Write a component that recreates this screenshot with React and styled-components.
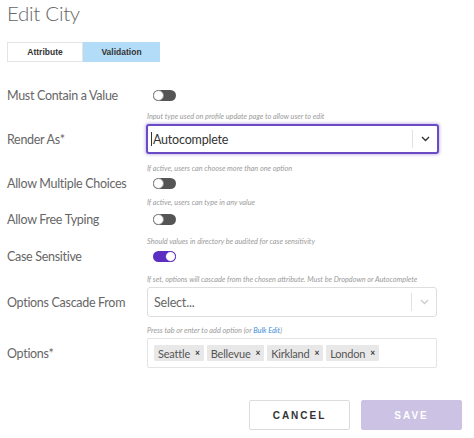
import React from "react";
import styled, { createGlobalStyle } from "styled-components";

const Global = createGlobalStyle`
  html, body { margin: 0; padding: 0; background: #fff; }
  body { font-family: Lato, "Open Sans", sans-serif; color: #555; }
  * { box-sizing: border-box; }
`;

const Page = styled.div`
  width: 474px;
  height: 438px;
  padding: 0 7px;
  overflow: hidden;
`;

const Title = styled.h1`
  margin: 0;
  padding-top: 0;
  font-family: Lato, sans-serif;
  font-weight: 300;
  font-size: 20.5px;
  line-height: 26px;
  letter-spacing: -0.3px;
  color: #666;
`;

const Tabs = styled.div`
  display: flex;
  margin-top: 16px;
  height: 20px;
`;

const Tab = styled.div`
  width: ${(p) => p.$w}px;
  display: flex;
  align-items: center;
  justify-content: center;
  font-family: "Liberation Sans", Arial, sans-serif;
  font-weight: bold;
  font-size: 8.5px;
  color: #333;
  background: ${(p) => (p.$active ? "#b3dcf8" : "#fff")};
  border: 1px solid ${(p) => (p.$active ? "#b3dcf8" : "#e4e4e4")};
`;

const Form = styled.div`
  display: flex;
  flex-direction: column;
`;

const Field = styled.div`
  display: grid;
  grid-template-columns: 140px 292px;
  margin-top: ${(p) => p.$mt}px;
`;

const Hint = styled.div`
  grid-column: 2;
  grid-row: 1;
  font-style: italic;
  font-size: 7.3px;
  line-height: 10px;
  height: 10px;
  color: #9a9a9a;
  margin-bottom: ${(p) => p.$mb ?? 2}px;
  white-space: nowrap;
  a { color: #3d8fd9; text-decoration: none; }
`;

const Label = styled.div`
  grid-column: 1;
  grid-row: 2;
  align-self: center;
  font-size: 12.5px;
  line-height: 11px;
  letter-spacing: -0.3px;
  color: #666;
  white-space: nowrap;
`;

const Control = styled.div`
  grid-column: 2;
  grid-row: 2;
  display: flex;
  align-items: center;
  height: ${(p) => p.$h}px;
`;

const Track = styled.div`
  position: relative;
  width: 23px;
  height: 11px;
  border-radius: 6px;
  margin-left: 6px;
  background: ${(p) => (p.$on ? "#5a2fc2" : "#555")};
`;

const Knob = styled.div`
  position: absolute;
  top: 0;
  ${(p) => (p.$on ? "right: 0;" : "left: 0;")}
  width: 11px;
  height: 11px;
  border-radius: 50%;
  background: #fff;
  border: 1px solid ${(p) => (p.$on ? "#5a2fc2" : "#888")};
`;

const Toggle = ({ on }) => (
  <Track $on={on}>
    <Knob $on={on} />
  </Track>
);

const SelectBox = styled.div`
  width: ${(p) => p.$w}px;
  height: 30px;
  display: flex;
  align-items: center;
  border-radius: 3px;
  background: #fff;
  border: ${(p) => (p.$focus ? "2px solid #6a4bc4" : "1px solid #dedede")};
  box-shadow: ${(p) => (p.$focus ? "0 0 3px 1px rgba(106,75,196,0.35)" : "none")};
  margin-left: ${(p) => p.$ml || 0}px;
`;

const SelectValue = styled.div`
  flex: 1;
  padding-left: ${(p) => p.$pl}px;
  font-size: 12.5px;
  letter-spacing: -0.2px;
  color: ${(p) => (p.$placeholder ? "#666" : "#333")};
  display: flex;
  align-items: center;
`;

const Caret = styled.span`
  display: inline-block;
  width: 1px;
  height: 14px;
  background: #333;
  margin-right: 1px;
`;

const Sep = styled.div`
  width: 1px;
  height: 18px;
  background: #e2e2e2;
`;

const Chevron = styled.div`
  width: 24px;
  display: flex;
  justify-content: center;
  align-items: center;
`;

const Chev = ({ color }) => (
  <svg width="9" height="6" viewBox="0 0 9 6">
    <path d="M1 1 L4.5 4.5 L8 1" fill="none" stroke={color} strokeWidth="1.4" />
  </svg>
);

const TagBox = styled.div`
  width: 290px;
  height: 30px;
  display: flex;
  align-items: center;
  gap: 3px;
  padding-left: 6px;
  border: 1px solid #e4e4e4;
  border-radius: 2px;
`;

const Tag = styled.div`
  display: flex;
  align-items: center;
  height: 16px;
  padding: 0 4px 0 4px;
  background: #e8e8e8;
  font-size: 11px;
  letter-spacing: -0.2px;
  color: #555;
  border-radius: 1px;
`;

const TagX = styled.span`
  margin-left: 5px;
  font-size: 8.5px;
  font-weight: bold;
  color: #333;
`;

const Footer = styled.div`
  display: flex;
  justify-content: flex-end;
  gap: 11px;
  margin-top: 32px;
  padding-right: 5px;
`;

const Button = styled.button`
  width: 101px;
  height: 30px;
  border-radius: 2px;
  font-family: "Liberation Sans", Arial, sans-serif;
  font-weight: bold;
  font-size: 10px;
  letter-spacing: 2px;
  cursor: pointer;
  color: ${(p) => (p.$primary ? "#fff" : "#333")};
  background: ${(p) => (p.$primary ? "#cbc2e4" : "#fff")};
  border: 1px solid ${(p) => (p.$primary ? "#cbc2e4" : "#dcdcdc")};
`;

export default function App() {
  const tags = ["Seattle", "Bellevue", "Kirkland", "London"];
  return (
    <Page>
      <Global />
      <Title>Edit City</Title>
      <Tabs>
        <Tab $w={76}>Attribute</Tab>
        <Tab $w={77} $active>
          Validation
        </Tab>
      </Tabs>
      <Form>
        <Field $mt={28}>
          <Label>Must Contain a Value</Label>
          <Control $h={11}>
            <Toggle />
          </Control>
        </Field>
        <Field $mt={11}>
          <Hint>Input type used on profile update page to allow user to edit</Hint>
          <Label>Render As*</Label>
          <Control $h={30}>
            <SelectBox $w={293} $focus $ml={-1}>
              <SelectValue $pl={3}>
                <Caret />
                Autocomplete
              </SelectValue>
              <Sep />
              <Chevron>
                <Chev color="#333" />
              </Chevron>
            </SelectBox>
          </Control>
        </Field>
        <Field $mt={10}>
          <Hint $mb={4}>If active, users can choose more than one option</Hint>
          <Label>Allow Multiple Choices</Label>
          <Control $h={11}>
            <Toggle />
          </Control>
        </Field>
        <Field $mt={9}>
          <Hint $mb={6}>If active, users can type in any value</Hint>
          <Label>Allow Free Typing</Label>
          <Control $h={11}>
            <Toggle />
          </Control>
        </Field>
        <Field $mt={12}>
          <Hint $mb={4}>Should values in directory be audited for case sensitivity</Hint>
          <Label>Case Sensitive</Label>
          <Control $h={11}>
            <Toggle on />
          </Control>
        </Field>
        <Field $mt={13}>
          <Hint $mb={2}>
            If set, options will cascade from the chosen attribute. Must be Dropdown or Autocomplete
          </Hint>
          <Label>Options Cascade From</Label>
          <Control $h={30}>
            <SelectBox $w={290}>
              <SelectValue $pl={6} $placeholder>
                Select...
              </SelectValue>
              <Sep />
              <Chevron>
                <Chev color="#ccc" />
              </Chevron>
            </SelectBox>
          </Control>
        </Field>
        <Field $mt={9}>
          <Hint $mb={2}>
            Press tab or enter to add option (or <a href="#">Bulk Edit</a>)
          </Hint>
          <Label>Options*</Label>
          <Control $h={30}>
            <TagBox>
              {tags.map((t) => (
                <Tag key={t}>
                  {t}
                  <TagX>×</TagX>
                </Tag>
              ))}
            </TagBox>
          </Control>
        </Field>
      </Form>
      <Footer>
        <Button>CANCEL</Button>
        <Button $primary>SAVE</Button>
      </Footer>
    </Page>
  );
}
